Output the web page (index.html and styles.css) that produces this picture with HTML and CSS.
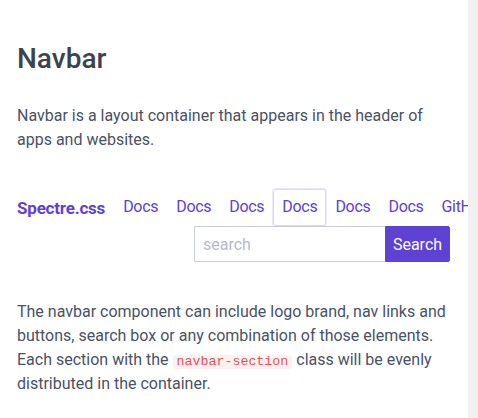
FILE: index.html
```html
<!DOCTYPE html>
<html lang="en">
<head>
<meta charset="utf-8">
<title>Navbar</title>
<link rel="stylesheet" href="styles.css">
</head>
<body>
<div class="page">
  <main class="main">
    <h2 class="title">Navbar</h2>
    <p class="text">Navbar is a layout container that appears in the header of apps and websites.</p>
    <div class="navbar">
      <div class="nav-row">
        <a class="brand" href="#">Spectre.css</a>
        <a class="btn-link" href="#">Docs</a>
        <a class="btn-link" href="#">Docs</a>
        <a class="btn-link" href="#">Docs</a>
        <a class="btn-link focused" href="#">Docs</a>
        <a class="btn-link" href="#">Docs</a>
        <a class="btn-link" href="#">Docs</a>
        <a class="btn-link" href="#">GitHub</a>
      </div>
      <div class="search-row">
        <input class="search-input" type="text" placeholder="search">
        <button class="search-btn">Search</button>
      </div>
    </div>
    <p class="text text2">The navbar component can include logo brand, nav links and buttons, search box or any combination of those elements. Each section with the <code class="code">navbar-section</code> class will be evenly distributed in the container.</p>
  </main>
  <div class="scrollbar"></div>
</div>
</body>
</html>
```
FILE: styles.css
```css
html, body {
  margin: 0;
  padding: 0;
  background: #fff;
}
body {
  font-family: Roboto, "Liberation Sans", sans-serif;
  color: #3b4351;
}
.page {
  display: flex;
  width: 478px;
  height: 418px;
  overflow: hidden;
}
.main {
  width: 468px;
  flex: none;
  overflow: hidden;
  padding: 0 18px 0 17px;
  box-sizing: border-box;
}
.scrollbar {
  width: 10px;
  flex: none;
  background: #f0f0f0;
}
.title {
  margin: 42px 0 0;
  font-size: 28px;
  line-height: 34px;
  font-weight: 500;
  color: #3b4351;
}
.text {
  margin: 28px 0 0;
  font-size: 16px;
  line-height: 24px;
  color: #4a5263;
}
.navbar {
  margin-top: 37px;
}
.nav-row {
  display: flex;
  align-items: center;
  white-space: nowrap;
  height: 37px;
}
.brand {
  font-size: 17px;
  font-weight: 700;
  letter-spacing: -0.2px;
  color: #5e42d3;
  text-decoration: none;
  margin-right: 9px;
}
.btn-link {
  display: block;
  flex: none;
  box-sizing: border-box;
  height: 37px;
  padding: 5px 8px 0;
  font-size: 16px;
  line-height: 24px;
  color: #5e42d3;
  text-decoration: none;
  border: 1px solid transparent;
  border-radius: 3px;
  letter-spacing: -0.3px;
}
.btn-link.focused {
  border-color: #ddd7f7;
  box-shadow: 0 0 0 1px #ebe7fb;
}
.search-row {
  display: flex;
  justify-content: flex-end;
}
.search-input {
  width: 191px;
  height: 36px;
  box-sizing: border-box;
  border: 1px solid #c6cbd6;
  border-right: none;
  border-radius: 2px 0 0 2px;
  padding: 5px 8px;
  font-family: Roboto, "Liberation Sans", sans-serif;
  font-size: 16px;
  color: #3b4351;
  outline: none;
  margin: 0;
}
.search-input::placeholder {
  color: #b4bbc7;
}
.search-btn {
  width: 65px;
  height: 36px;
  box-sizing: border-box;
  border: 1px solid #5e42d3;
  background: #5e42d3;
  color: #fff;
  border-radius: 0 2px 2px 0;
  font-family: Roboto, "Liberation Sans", sans-serif;
  font-size: 16px;
  padding: 0;
  margin: 0;
}
.text2 {
  margin-top: 38px;
}
.code {
  display: inline-block;
  font-family: "Liberation Mono", monospace;
  font-size: 13.3px;
  line-height: 14px;
  padding: 0 4px;
  border-radius: 2px;
  background: #fdf0f0;
  color: #e0535c;
}
```
